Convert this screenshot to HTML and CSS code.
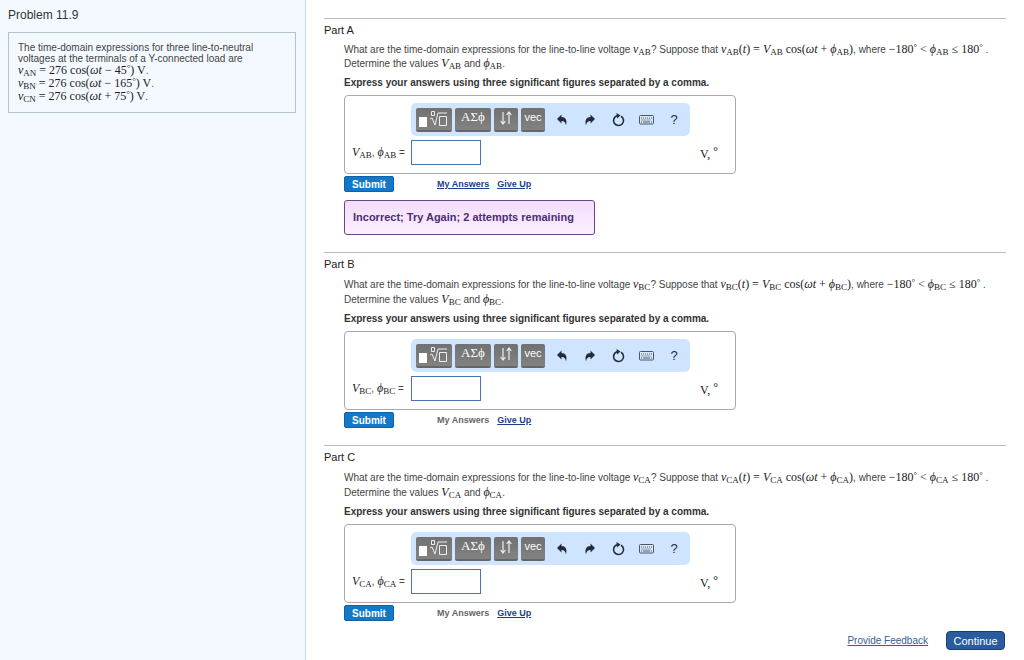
FILE: index.html
```html
<!DOCTYPE html>
<html lang="en">
<head>
    <meta charset="UTF-8">
    <meta name="viewport" content="width=device-width, initial-scale=1.0">
    <title>Problem 11.9</title>
    <link rel="stylesheet" href="styles.css">
</head>
<body>
    <!-- toolbar icons, shared by every answer box -->
    <svg class="icon-defs" aria-hidden="true">
        <symbol id="icon-templates" viewBox="0 0 30 18">
            <path d="M0 7h8v10H0z" fill="#fff"/>
            <path d="M12.500 1.500h3v4h-3zM11 9l2-1 3 7 3-12h9M20.500 6.500h7v9h-7z" fill="none" stroke="#eee"/>
        </symbol>
        <symbol id="icon-arrows" viewBox="0 0 10 12">
            <path d="M2.500 1v10M.5 8.500l2 2.500 2-2.500M7.500 11V1M5.500 3.500l2-2.500 2 2.500" fill="none" stroke="#eee"/>
        </symbol>
        <symbol id="icon-undo" viewBox="0 0 12 12">
            <path d="M1 5l4.500-4.500v2.500C9.500 3 11.500 6 10 11.500 9.500 8.500 8.500 7 5.500 7v2.500z" fill="#222c38"/>
        </symbol>
        <symbol id="icon-redo" viewBox="0 0 12 12">
            <path d="M11 5L6.500.5v2.500C2.500 3 .5 6 2 11.500 2.500 8.500 3.500 7 6.500 7v2.500z" fill="#222c38"/>
        </symbol>
        <symbol id="icon-reset" viewBox="0 0 14 14">
            <path d="M10 3.200A5 5 0 1 1 6 2.800" fill="none" stroke="#222c38" stroke-width="1.600"/>
            <path d="M5.500 0l4 2.600-3.500 3z" fill="#222c38"/>
        </symbol>
        <symbol id="icon-keyboard" viewBox="0 0 15 10">
            <rect x=".5" y=".5" width="14" height="8.500" rx="1" fill="#dce9f5" stroke="#46566a"/>
            <path d="M2 3h11M2.500 5h10" stroke="#46566a" stroke-dasharray="1 1"/>
            <path d="M2 7h1M4 7h7M12 7h1" stroke="#46566a"/>
        </symbol>
    </svg>

    <div class="page">
        <aside class="sidebar">
            <h1>Problem 11.9</h1>
            <div class="intro">
                <p>The time-domain expressions for three line-to-neutral voltages at the terminals of a Y-connected load are</p>
                <p class="equation"><span class="math"><i>v</i><sub>AN</sub> = 276 cos(<i>ωt</i> − 45<sup>°</sup>) V</span>.</p>
                <p class="equation"><span class="math"><i>v</i><sub>BN</sub> = 276 cos(<i>ωt</i> − 165<sup>°</sup>) V</span>.</p>
                <p class="equation"><span class="math"><i>v</i><sub>CN</sub> = 276 cos(<i>ωt</i> + 75<sup>°</sup>) V</span>.</p>
            </div>
        </aside>

        <main class="content">
            <section class="part">
                <h2>Part A</h2>
                <div class="part-body">
                    <p class="question">What are the time-domain expressions for the line-to-line voltage <span class="math"><i>v</i><sub>AB</sub></span>? Suppose that <span class="math"><i>v</i><sub>AB</sub>(<i>t</i>) = <i>V</i><sub>AB</sub> cos(<i>ωt</i> + <i>ϕ</i><sub>AB</sub>)</span>, where <span class="math">−180<sup>°</sup> &lt; <i>ϕ</i><sub>AB</sub> ≤ 180<sup>°</sup></span> .<br>
                    Determine the values <span class="math"><i>V</i><sub>AB</sub></span> and <span class="math"><i>ϕ</i><sub>AB</sub></span>.</p>
                    <p class="instructions">Express your answers using three significant figures separated by a comma.</p>
                    <div class="answer-box">
                        <div class="toolbar">
                            <button class="tool tool-wide" aria-label="Templates"><svg width="30" height="18"><use href="#icon-templates"/></svg></button>
                            <button class="tool tool-wide tool-greek">ΑΣϕ</button>
                            <button class="tool" aria-label="Arrows"><svg width="12" height="16"><use href="#icon-arrows"/></svg></button>
                            <button class="tool">vec</button>
                            <button class="action" aria-label="Undo"><svg width="12" height="12"><use href="#icon-undo"/></svg></button>
                            <button class="action" aria-label="Redo"><svg width="12" height="12"><use href="#icon-redo"/></svg></button>
                            <button class="action" aria-label="Reset"><svg width="14" height="14"><use href="#icon-reset"/></svg></button>
                            <button class="action" aria-label="Keyboard"><svg width="15" height="10"><use href="#icon-keyboard"/></svg></button>
                            <button class="action">?</button>
                        </div>
                        <div class="answer-row">
                            <label for="answer-a"><span class="math"><i>V</i><sub>AB</sub></span>, <span class="math"><i>ϕ</i><sub>AB</sub></span> =</label>
                            <input type="text" id="answer-a">
                            <span class="units math">V, <sup>°</sup></span>
                        </div>
                    </div>
                    <div class="actions">
                        <button class="submit">Submit</button>
                        <a href="#">My Answers</a>
                        <a href="#">Give Up</a>
                    </div>
                    <div class="feedback">Incorrect; Try Again; 2 attempts remaining</div>
                </div>
            </section>

            <section class="part">
                <h2>Part B</h2>
                <div class="part-body">
                    <p class="question">What are the time-domain expressions for the line-to-line voltage <span class="math"><i>v</i><sub>BC</sub></span>? Suppose that <span class="math"><i>v</i><sub>BC</sub>(<i>t</i>) = <i>V</i><sub>BC</sub> cos(<i>ωt</i> + <i>ϕ</i><sub>BC</sub>)</span>, where <span class="math">−180<sup>°</sup> &lt; <i>ϕ</i><sub>BC</sub> ≤ 180<sup>°</sup></span> .<br>
                    Determine the values <span class="math"><i>V</i><sub>BC</sub></span> and <span class="math"><i>ϕ</i><sub>BC</sub></span>.</p>
                    <p class="instructions">Express your answers using three significant figures separated by a comma.</p>
                    <div class="answer-box">
                        <div class="toolbar">
                            <button class="tool tool-wide" aria-label="Templates"><svg width="30" height="18"><use href="#icon-templates"/></svg></button>
                            <button class="tool tool-wide tool-greek">ΑΣϕ</button>
                            <button class="tool" aria-label="Arrows"><svg width="12" height="16"><use href="#icon-arrows"/></svg></button>
                            <button class="tool">vec</button>
                            <button class="action" aria-label="Undo"><svg width="12" height="12"><use href="#icon-undo"/></svg></button>
                            <button class="action" aria-label="Redo"><svg width="12" height="12"><use href="#icon-redo"/></svg></button>
                            <button class="action" aria-label="Reset"><svg width="14" height="14"><use href="#icon-reset"/></svg></button>
                            <button class="action" aria-label="Keyboard"><svg width="15" height="10"><use href="#icon-keyboard"/></svg></button>
                            <button class="action">?</button>
                        </div>
                        <div class="answer-row">
                            <label for="answer-b"><span class="math"><i>V</i><sub>BC</sub></span>, <span class="math"><i>ϕ</i><sub>BC</sub></span> =</label>
                            <input type="text" id="answer-b">
                            <span class="units math">V, <sup>°</sup></span>
                        </div>
                    </div>
                    <div class="actions">
                        <button class="submit">Submit</button>
                        <span class="disabled">My Answers</span>
                        <a href="#">Give Up</a>
                    </div>
                </div>
            </section>

            <section class="part">
                <h2>Part C</h2>
                <div class="part-body">
                    <p class="question">What are the time-domain expressions for the line-to-line voltage <span class="math"><i>v</i><sub>CA</sub></span>? Suppose that <span class="math"><i>v</i><sub>CA</sub>(<i>t</i>) = <i>V</i><sub>CA</sub> cos(<i>ωt</i> + <i>ϕ</i><sub>CA</sub>)</span>, where <span class="math">−180<sup>°</sup> &lt; <i>ϕ</i><sub>CA</sub> ≤ 180<sup>°</sup></span> .<br>
                    Determine the values <span class="math"><i>V</i><sub>CA</sub></span> and <span class="math"><i>ϕ</i><sub>CA</sub></span>.</p>
                    <p class="instructions">Express your answers using three significant figures separated by a comma.</p>
                    <div class="answer-box">
                        <div class="toolbar">
                            <button class="tool tool-wide" aria-label="Templates"><svg width="30" height="18"><use href="#icon-templates"/></svg></button>
                            <button class="tool tool-wide tool-greek">ΑΣϕ</button>
                            <button class="tool" aria-label="Arrows"><svg width="12" height="16"><use href="#icon-arrows"/></svg></button>
                            <button class="tool">vec</button>
                            <button class="action" aria-label="Undo"><svg width="12" height="12"><use href="#icon-undo"/></svg></button>
                            <button class="action" aria-label="Redo"><svg width="12" height="12"><use href="#icon-redo"/></svg></button>
                            <button class="action" aria-label="Reset"><svg width="14" height="14"><use href="#icon-reset"/></svg></button>
                            <button class="action" aria-label="Keyboard"><svg width="15" height="10"><use href="#icon-keyboard"/></svg></button>
                            <button class="action">?</button>
                        </div>
                        <div class="answer-row">
                            <label for="answer-c"><span class="math"><i>V</i><sub>CA</sub></span>, <span class="math"><i>ϕ</i><sub>CA</sub></span> =</label>
                            <input type="text" id="answer-c">
                            <span class="units math">V, <sup>°</sup></span>
                        </div>
                    </div>
                    <div class="actions">
                        <button class="submit">Submit</button>
                        <span class="disabled">My Answers</span>
                        <a href="#">Give Up</a>
                    </div>
                </div>
            </section>

            <footer class="footer">
                <a href="#">Provide Feedback</a>
                <button class="continue">Continue</button>
            </footer>
        </main>
    </div>
</body>
</html>
```
FILE: styles.css
```css
* {
    box-sizing: border-box;
}
body {
    margin: 0;
    font-family: "Liberation Sans", Arial, sans-serif;
    font-size: 10px;
    line-height: 14px;
    color: #444;
    background-color: #fff;
}
h1, h2, p {
    margin: 0;
}
button {
    font-family: inherit;
    padding: 0;
    border: none;
    cursor: pointer;
}
svg {
    display: block;
}
.icon-defs {
    display: none;
}
.page {
    display: flex;
    min-height: 100vh;
}

/* left column */
.sidebar {
    flex: 0 0 306px;
    padding: 8px 9px 8px 8px;
    background-color: #f3f9ff;
    border-right: 1px solid #ccd6de;
}
h1 {
    font-size: 12px;
    font-weight: normal;
    line-height: 14px;
    color: #333;
}
.intro {
    margin-top: 10px;
    padding: 9px;
    border: 1px solid #b4c4cc;
    line-height: 11px;
}
.equation {
    line-height: 13px;
}

/* math */
.math {
    font-family: "Liberation Serif", "Times New Roman", serif;
    font-size: 12px;
    line-height: 0;
    color: #222;
    white-space: nowrap;
}
.math sub, .math sup {
    font-size: 9px;
    line-height: 0;
}
.math sub {
    vertical-align: -2px;
}
.math sup {
    vertical-align: 3px;
}

/* right column */
.content {
    flex: 1;
    min-width: 0;
    padding: 18px 18px 10px;
}
.part {
    padding-bottom: 17px;
    border-top: 1px solid #bbb;
}
.part:last-of-type {
    padding-bottom: 10px;
}
h2 {
    padding-top: 4px;
    font-size: 11px;
    font-weight: normal;
    line-height: 14px;
    color: #222;
}
.part-body {
    padding: 6px 0 0 20px;
}
.part + .part .question {
    line-height: 15px;
}
.instructions {
    margin: 5px 0;
    font-weight: bold;
    color: #333;
}
.answer-box {
    max-width: 392px;
    padding: 7px 7px 8px;
    border: 1px solid #aaa;
    border-radius: 4px;
}
.toolbar {
    display: flex;
    align-items: center;
    width: 279px;
    height: 33px;
    margin-left: 59px;
    padding-left: 5px;
    background-color: #cfe5ff;
    border-radius: 5px;
}
.tool {
    display: flex;
    justify-content: center;
    width: 24px;
    height: 24px;
    margin-right: 3px;
    padding-top: 2px;
    font-size: 11px;
    line-height: 14px;
    color: #fff;
    background: linear-gradient(#717171, #828282);
    border-bottom: 2px solid #666;
    border-radius: 2px;
}
.tool-wide {
    width: 36px;
}
.tool-greek {
    font-family: "Liberation Serif", serif;
    font-size: 13px;
}
.action {
    display: flex;
    justify-content: center;
    align-items: center;
    width: 28px;
    height: 24px;
    font-size: 13px;
    color: #222c38;
    background: none;
}
.answer-row {
    display: flex;
    align-items: center;
    margin-top: 4px;
}
.answer-row label {
    width: 59px;
}
.answer-row input {
    width: 70px;
    height: 25px;
    border: 1px solid #4a72b8;
}
.units {
    margin: 0 10px 0 auto;
}
.units sup {
    font-size: 12px;
}
.actions {
    display: flex;
    align-items: center;
    margin-top: 2px;
    font-size: 9px;
    font-weight: bold;
}
.submit {
    width: 50px;
    height: 16px;
    margin-right: 43px;
    font-size: 10px;
    font-weight: bold;
    color: #fff;
    background-color: #1478c8;
    border: 1px solid #0d62ab;
    border-radius: 2px;
}
.actions a, .disabled {
    margin-right: 8px;
}
.actions a {
    color: #1b3f8b;
}
.disabled {
    color: #666;
}
.feedback {
    width: fit-content;
    min-width: 251px;
    margin-top: 8px;
    padding: 9px 8px;
    font-size: 11px;
    font-weight: bold;
    line-height: 15px;
    color: #4d2d70;
    background: linear-gradient(#f2dcfc, #fcf0ff);
    border: 1px solid #6c4481;
    border-radius: 3px;
}
.footer {
    display: flex;
    justify-content: flex-end;
    align-items: center;
    padding-right: 1px;
}
.footer a {
    color: #3a5a98;
}
.continue {
    width: 59px;
    height: 19px;
    margin-left: 18px;
    font-size: 11px;
    color: #fff;
    background-color: #2a5b9e;
    border: 1px solid #1b3d70;
    border-radius: 4px;
}
```
